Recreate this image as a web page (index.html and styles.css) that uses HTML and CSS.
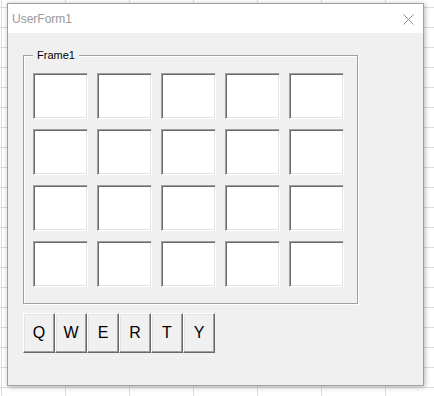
FILE: index.html
```html
<!DOCTYPE html>
<html lang="en">
<head>
  <meta charset="UTF-8" />
  <meta name="viewport" content="width=device-width, initial-scale=1.0" />
  <title>UserForm1</title>
  <link rel="stylesheet" href="styles.css">
</head>
<body>
  <div class="window">
    <div class="titlebar">
      <span class="title">UserForm1</span>
      <svg class="close" width="11" height="11" viewBox="0 0 11 11">
        <path d="M0.5 0.5 L10.5 10.5 M10.5 0.5 L0.5 10.5" stroke="#8f8f8f" stroke-width="1" fill="none" />
      </svg>
    </div>

    <div class="client">
      <div class="frame">
        <span class="frame-label">Frame1</span>
        <div class="box-grid">
          <div class="textbox"></div><div class="textbox"></div><div class="textbox"></div><div class="textbox"></div><div class="textbox"></div>
          <div class="textbox"></div><div class="textbox"></div><div class="textbox"></div><div class="textbox"></div><div class="textbox"></div>
          <div class="textbox"></div><div class="textbox"></div><div class="textbox"></div><div class="textbox"></div><div class="textbox"></div>
          <div class="textbox"></div><div class="textbox"></div><div class="textbox"></div><div class="textbox"></div><div class="textbox"></div>
        </div>
      </div>

      <div class="keys">
        <button class="key">Q</button>
        <button class="key">W</button>
        <button class="key">E</button>
        <button class="key">R</button>
        <button class="key">T</button>
        <button class="key">Y</button>
      </div>
    </div>
  </div>
</body>
</html>
```

FILE: styles.css
```css
html, body {
  height: 100%;
}

body {
  margin: 0;
  font-family: 'Liberation Sans', Arial, sans-serif;
  background-color: #ffffff;
  background-image:
    linear-gradient(to right, #dcdcdc 1px, transparent 1px),
    linear-gradient(to bottom, #dcdcdc 1px, transparent 1px);
  background-size: 64px 20px;
  background-position: 1px 7px;
  overflow: hidden;
}

.window {
  box-sizing: border-box;
  width: 417px;
  height: 383px;
  margin: 3px 0 0 7px;
  border: 1px solid #a0a0a0;
  box-shadow: 1px 1px 5px rgba(0,0,0,0.3);
  display: flex;
  flex-direction: column;
  background-color: #f0f0f0;
}

.titlebar {
  height: 29px;
  background-color: #ffffff;
  display: flex;
  align-items: center;
  justify-content: space-between;
  padding: 0 9px 0 4px;
}

.title {
  font-size: 12px;
  color: #999999;
  padding-top: 1px;
}

.close {
  display: block;
  margin-top: 1px;
}

.client {
  flex-grow: 1;
  padding: 22px 0 0 15px;
  display: flex;
  flex-direction: column;
  align-items: flex-start;
}

.frame {
  position: relative;
  box-sizing: border-box;
  width: 335px;
  height: 249px;
  border: 1px solid #a0a0a0;
  box-shadow: 1px 1px 0 #ffffff, inset 1px 1px 0 #ffffff;
  padding: 17px 0 0 9px;
}

.frame-label {
  position: absolute;
  top: -8px;
  left: 9px;
  padding: 0 4px;
  line-height: 14px;
  font-size: 11px;
  color: #000000;
  background-color: #f0f0f0;
}

.box-grid {
  display: grid;
  grid-template-columns: repeat(5, 55px);
  grid-auto-rows: 46px;
  gap: 10px 9px;
}

.textbox {
  box-sizing: border-box;
  background-color: #ffffff;
  border-top: 1px solid #a0a0a0;
  border-left: 1px solid #a0a0a0;
  border-bottom: 1px solid #ffffff;
  border-right: 1px solid #ffffff;
  box-shadow: inset 1px 1px 0 #696969, inset -1px -1px 0 #e3e3e3;
}

.keys {
  display: flex;
  margin-top: 9px;
}

.key {
  box-sizing: border-box;
  width: 32px;
  height: 40px;
  padding: 0;
  margin: 0;
  font-family: 'Liberation Sans', Arial, sans-serif;
  font-size: 16px;
  color: #000000;
  background-color: #f0f0f0;
  border-top: 1px solid #ffffff;
  border-left: 1px solid #ffffff;
  border-bottom: 1px solid #696969;
  border-right: 1px solid #696969;
  box-shadow: inset -1px -1px 0 #a0a0a0, inset 1px 1px 0 #e3e3e3;
  border-radius: 0;
}
```
